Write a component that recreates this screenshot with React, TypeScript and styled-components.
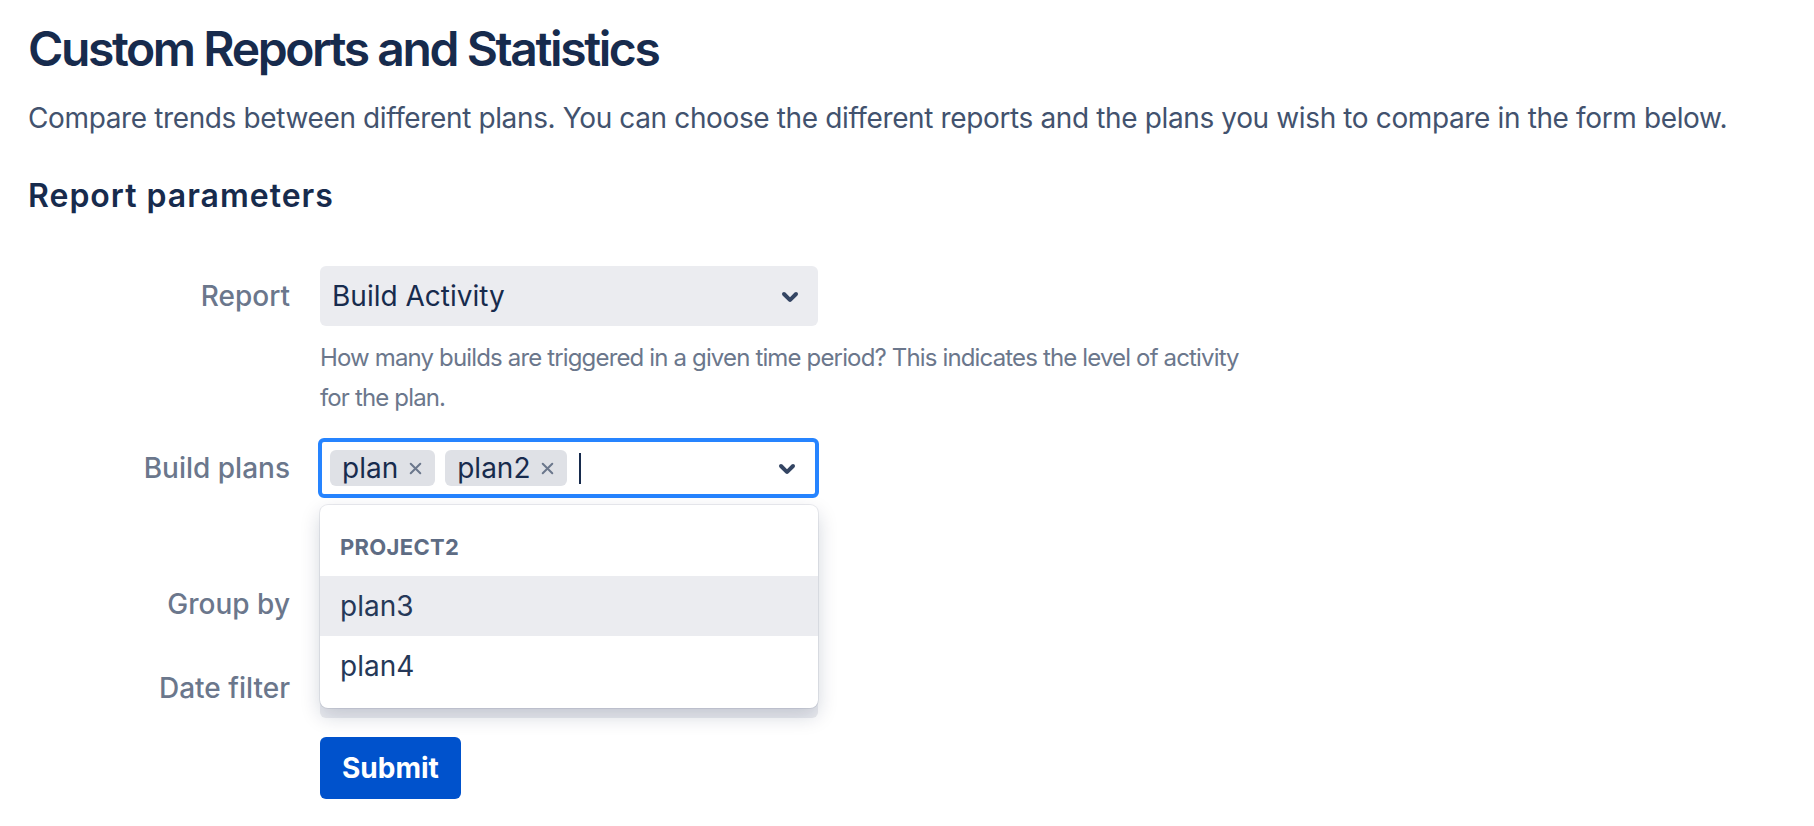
import React from "react";
import styled, { createGlobalStyle } from "styled-components";

const GlobalStyle = createGlobalStyle`
  html, body {
    margin: 0;
    padding: 0;
    background: #ffffff;
  }
  body {
    font-family: Inter, "Noto Sans", "Liberation Sans", sans-serif;
    color: #172b4d;
  }
`;

const ChevronDown = () => (
  <ChevronSvg viewBox="0 0 24 24" aria-hidden>
    <path
      d="M8.292 10.293a1.009 1.009 0 0 0 0 1.419l2.939 2.965c.218.215.5.322.779.322s.556-.107.769-.322l2.93-2.955a1.01 1.01 0 0 0 0-1.419.987.987 0 0 0-1.406 0l-2.298 2.317-2.307-2.327a.99.99 0 0 0-1.406 0z"
      fill="currentColor"
    />
  </ChevronSvg>
);

const CrossIcon = () => (
  <CrossSvg viewBox="0 0 16 16" aria-hidden>
    <path d="M3.5 3.5l9 9M12.5 3.5l-9 9" stroke="currentColor" strokeWidth="1.9" strokeLinecap="round" />
  </CrossSvg>
);

const App = () => {
  const tags = ["plan", "plan2"];

  return (
    <Page>
      <GlobalStyle />
      <Title>Custom Reports and Statistics</Title>
      <Intro>
        Compare trends between different plans. You can choose the different reports and the plans you wish to
        compare in the form below.
      </Intro>
      <SectionTitle>Report parameters</SectionTitle>

      <Form>
        <Row>
          <Label>Report</Label>
          <Select>
            <SelectValue>Build Activity</SelectValue>
            <ChevronDown />
          </Select>
        </Row>
        <HelpRow>
          <HelpText>
            How many builds are triggered in a given time period? This indicates the level of activity for the plan.
          </HelpText>
        </HelpRow>

        <Row $top={20}>
          <Label>Build plans</Label>
          <MultiWrap>
            <MultiSelect>
              {tags.map((t) => (
                <Tag key={t}>
                  <TagText>{t}</TagText>
                  <CrossIcon />
                </Tag>
              ))}
              <Caret />
              <Spacer />
              <ChevronDown />
            </MultiSelect>
            <Menu>
              <GroupHeading>PROJECT2</GroupHeading>
              <Option $active>plan3</Option>
              <Option>plan4</Option>
            </Menu>
          </MultiWrap>
        </Row>

        <Row $top={76}>
          <Label>Group by</Label>
          <Select />
        </Row>
        <Row $top={24}>
          <Label>Date filter</Label>
          <Select />
        </Row>
        <Row $top={19}>
          <span />
          <div>
            <SubmitButton type="button">Submit</SubmitButton>
          </div>
        </Row>
      </Form>
    </Page>
  );
};

export default App;

const Page = styled.div`
  padding: 21px 30px 40px 28px;
`;

const Title = styled.h1`
  margin: 0;
  font-size: 48px;
  line-height: 56px;
  font-weight: 600;
  letter-spacing: -2.4px;
  color: #172b4d;
`;

const Intro = styled.p`
  margin: 21px 0 0 0;
  font-size: 28px;
  line-height: 40px;
  color: #42526e;
  letter-spacing: -0.37px;
`;

const SectionTitle = styled.h3`
  margin: 38px 0 0 0;
  font-size: 32px;
  line-height: 40px;
  font-weight: 600;
  letter-spacing: 1px;
  color: #172b4d;
`;

const Form = styled.div`
  margin-top: 50px;
  display: flex;
  flex-direction: column;
`;

const Row = styled.div<{ $top?: number }>`
  display: grid;
  grid-template-columns: 262px 498px;
  column-gap: 30px;
  align-items: center;
  margin-top: ${(p) => p.$top ?? 0}px;
`;

const HelpRow = styled.div`
  display: grid;
  grid-template-columns: 262px 950px;
  column-gap: 30px;
  margin-top: 12px;
  & > * {
    grid-column: 2;
  }
`;

const Label = styled.label`
  text-align: right;
  font-size: 28px;
  line-height: 40px;
  font-weight: 500;
  color: #6b778c;
`;

const Select = styled.div`
  height: 60px;
  box-sizing: border-box;
  display: flex;
  align-items: center;
  justify-content: space-between;
  padding: 0 14px 0 12px;
  background: #ebecf0;
  border-radius: 6px;
  color: #344563;
`;

const SelectValue = styled.span`
  font-size: 28px;
  color: #172b4d;
`;

const ChevronSvg = styled.svg`
  width: 48px;
  height: 48px;
  margin-right: -10px;
  flex-shrink: 0;
  color: #344563;
`;

const HelpText = styled.div`
  width: 950px;
  font-size: 24px;
  line-height: 40px;
  letter-spacing: -0.85px;
  color: #6b778c;
`;

const MultiWrap = styled.div`
  position: relative;
`;

const MultiSelect = styled.div`
  height: 60px;
  box-sizing: border-box;
  display: flex;
  align-items: center;
  gap: 10px;
  padding: 0 14px 0 8px;
  border: 4px solid #2684ff;
  border-radius: 6px;
  background: #ffffff;
  margin-left: -2px;
  margin-right: -1px;
`;

const Tag = styled.div`
  display: flex;
  align-items: center;
  height: 36px;
  padding: 0 11px 0 12px;
  gap: 9px;
  background: #dfe1e6;
  border-radius: 6px;
`;

const TagText = styled.span`
  font-size: 28px;
  line-height: 36px;
  color: #172b4d;
`;

const CrossSvg = styled.svg`
  width: 17px;
  height: 17px;
  color: #6b778c;
`;

const Caret = styled.span`
  width: 2px;
  height: 31px;
  background: #172b4d;
  margin-left: 2px;
`;

const Spacer = styled.span`
  flex: 1;
`;

const Menu = styled.div`
  position: absolute;
  top: 67px;
  left: 0;
  right: 0;
  z-index: 10;
  background: #ffffff;
  border-radius: 8px;
  padding-bottom: 12px;
  box-shadow: 0 0 0 1px rgba(9, 30, 66, 0.08), 0 8px 20px rgba(9, 30, 66, 0.18);
`;

const GroupHeading = styled.div`
  padding: 30px 21px 17px 20px;
  font-size: 22px;
  line-height: 24px;
  font-weight: 700;
  color: #5e6c84;
  letter-spacing: 0.3px;
`;

const Option = styled.div<{ $active?: boolean }>`
  height: 60px;
  display: flex;
  align-items: center;
  padding: 0 20px;
  font-size: 28px;
  color: #253858;
  background: ${(p) => (p.$active ? "#ebecf0" : "transparent")};
`;

const SubmitButton = styled.button`
  height: 62px;
  padding: 0 22px;
  border: none;
  border-radius: 6px;
  background: #0052cc;
  color: #ffffff;
  font-family: Inter, "Noto Sans", "Liberation Sans", sans-serif;
  font-size: 28px;
  font-weight: 700;
  cursor: pointer;
`;
